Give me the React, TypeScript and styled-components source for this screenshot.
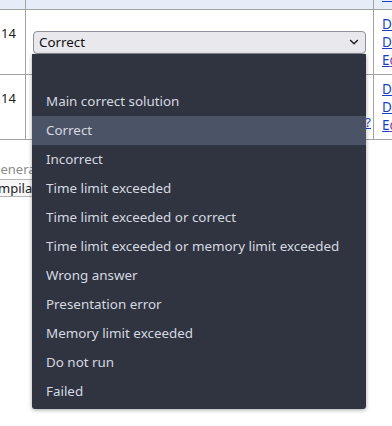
import styled, { createGlobalStyle } from "styled-components";

const GlobalStyle = createGlobalStyle`
  html, body {
    margin: 0;
    padding: 0;
    background: #ffffff;
  }
  body {
    font-family: "Noto Sans", "Open Sans", sans-serif;
  }
`;

const Page = styled.div`
  width: 392px;
  height: 426px;
  overflow: hidden;
  position: relative;
  background: #fff;
`;

const Table = styled.div`
  display: grid;
  grid-template-columns: 26px 348px 80px;
  width: 454px;
`;

const HeadCell = styled.div<{ $last?: boolean }>`
  height: 9px;
  background: #e7edf8;
  border-bottom: 1px solid #a3a3a3;
  border-right: ${(p) => (p.$last ? "none" : "1px solid #a3a3a3")};
  overflow: hidden;
  padding-left: 8px;
`;

const Cell = styled.div<{ $last?: boolean }>`
  border-bottom: 1px solid #a3a3a3;
  border-right: ${(p) => (p.$last ? "none" : "1px solid #a3a3a3")};
  font-size: 13px;
  line-height: 18px;
  color: #222;
`;

const NumCell = styled(Cell)`
  padding-top: 14px;
  padding-left: 1px;
`;

const MidCell = styled(Cell)`
  display: flex;
  flex-direction: column;
  justify-content: center;
  padding: 0 7px;
  position: relative;
`;

const LinkCell = styled(Cell)`
  padding: 5px 0 5px 8px;
  display: flex;
  flex-direction: column;
  height: 54px;
  font-size: 13.5px;
`;

const Link = styled.a`
  color: #1a3fc4;
  text-decoration: underline;
  white-space: nowrap;
  cursor: pointer;
`;

const Visited = styled.span`
  color: #7b3fa8;
  text-decoration: underline;
`;

const HelpLink = styled(Link)`
  position: absolute;
  right: 2px;
  bottom: 8px;
  font-size: 13px;
`;

const HeadLink = styled(Link)`
  display: block;
  font-size: 13px;
  line-height: 13px;
  margin-top: -11px;
`;

const SelectWrap = styled.div`
  position: relative;
`;

const SelectBox = styled.div`
  height: 23px;
  box-sizing: border-box;
  border: 1px solid #8f8f9d;
  border-radius: 4px;
  background: #e9e9ed;
  display: flex;
  align-items: center;
  justify-content: space-between;
  padding: 0 6px 0 5px;
  font-size: 13.33px;
  color: #111;
`;

const Menu = styled.ul`
  position: absolute;
  top: 23px;
  left: -1px;
  width: 334px;
  margin: 0;
  padding: 4px 0 3px;
  list-style: none;
  background: #2f3440;
  border-radius: 0 0 3px 3px;
  box-shadow: 0 1px 4px rgba(0, 0, 0, 0.35);
  z-index: 10;
`;

const Option = styled.li<{ $active?: boolean }>`
  height: 29px;
  line-height: 29px;
  padding-left: 14px;
  font-size: 13.4px;
  color: #d6d9e0;
  background: ${(p) => (p.$active ? "#4b5366" : "transparent")};
  white-space: nowrap;
`;

const Footer = styled.div`
  padding-top: 22px;
  display: flex;
  flex-direction: column;
  align-items: flex-start;
  gap: 3px;
`;

const Note = styled.div`
  margin-left: -9px;
  font-size: 13px;
  line-height: 14px;
  color: #8a8a8a;
`;

const Field = styled.div`
  margin-left: -24px;
  border: 1px solid #b5b5b5;
  background: #f6f6f6;
  font-size: 13px;
  line-height: 16px;
  padding: 0 2px 0 5px;
  color: #222;
  width: 140px;
`;

const options = [
  "",
  "Main correct solution",
  "Correct",
  "Incorrect",
  "Time limit exceeded",
  "Time limit exceeded or correct",
  "Time limit exceeded or memory limit exceeded",
  "Wrong answer",
  "Presentation error",
  "Memory limit exceeded",
  "Do not run",
  "Failed",
];

function Chevron() {
  return (
    <svg width="10" height="6" viewBox="0 0 10 6">
      <polyline
        points="1.2,1 5,4.8 8.8,1"
        fill="none"
        stroke="#222"
        strokeWidth="1.5"
      />
    </svg>
  );
}

function Links() {
  return (
    <>
      <Link>Download</Link>
      <Link>Delete</Link>
      <Link>
        E<Visited>dit</Visited>
      </Link>
    </>
  );
}

export default function App() {
  return (
    <Page>
      <GlobalStyle />
      <Table>
        <HeadCell />
        <HeadCell />
        <HeadCell $last>
          <HeadLink>View</HeadLink>
        </HeadCell>

        <NumCell>14</NumCell>
        <MidCell>
          <SelectWrap>
            <SelectBox>
              <span>Correct</span>
              <Chevron />
            </SelectBox>
            <Menu>
              {options.map((o, i) => (
                <Option key={i} $active={o === "Correct"}>
                  {o}
                </Option>
              ))}
            </Menu>
          </SelectWrap>
        </MidCell>
        <LinkCell $last>
          <Links />
        </LinkCell>

        <NumCell>14</NumCell>
        <MidCell>
          <HelpLink>?</HelpLink>
        </MidCell>
        <LinkCell $last>
          <Links />
        </LinkCell>
      </Table>
      <Footer>
        <Note>Generated tests</Note>
        <Field>Compilable</Field>
      </Footer>
    </Page>
  );
}
